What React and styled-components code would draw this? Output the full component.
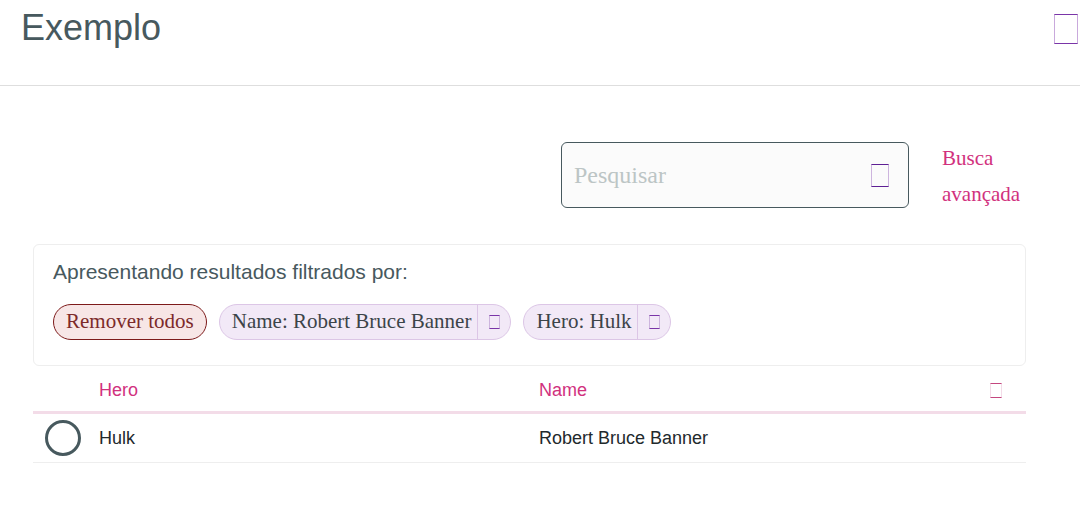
import React from 'react';
import styled, { createGlobalStyle } from 'styled-components';

const GlobalStyle = createGlobalStyle`
  * { box-sizing: border-box; }
  body {
    margin: 0;
    background: #fff;
    font-family: "Liberation Sans", Arial, sans-serif;
  }
`;

const Header = styled.header`
  display: flex;
  justify-content: space-between;
  height: 86px;
  padding: 14px 2px 0 21px;
  border-bottom: 1px solid #dedede;
`;

const Title = styled.h1`
  margin: -1px 0 0;
  font-size: 36px;
  line-height: 30px;
  font-weight: 400;
  color: #47595e;
`;

// icon font glyph that did not load: an empty box, heavy top and bottom
const Tofu = styled.span`
  display: block;
  flex: none;
  width: ${(p) => p.$w}px;
  height: ${(p) => p.$h}px;
  border-style: solid;
  border-width: 1px;
  border-color: ${(p) => p.$color} ${(p) => p.$side};
`;

const Main = styled.main`
  padding: 56px 54px 0 33px;
`;

const SearchRow = styled.div`
  display: flex;
  justify-content: flex-end;
  gap: 33px;
  font-family: "Liberation Serif", "Times New Roman", serif;
  margin-right: 5px;
`;

const SearchBox = styled.div`
  display: flex;
  align-items: center;
  width: 348px;
  height: 66px;
  padding: 0 19px 0 12px;
  border: 1px solid #47595e;
  border-radius: 6px;
  background: #fbfbfb;
`;

const SearchInput = styled.input`
  flex: 1;
  min-width: 0;
  border: 0;
  outline: 0;
  padding: 0;
  background: transparent;
  font: 24px "Liberation Serif", "Times New Roman", serif;
  color: #47595e;
  &::placeholder {
    color: #bcc5c5;
    opacity: 1;
  }
`;

const AdvancedLink = styled.a`
  width: 79px;
  font-size: 21px;
  line-height: 36px;
  color: #d1317e;
  margin-top: -2px;
`;

const FilterCard = styled.section`
  margin-top: 32px;
  height: 122px;
  padding: 15px 19px 0;
  border: 1px solid #eeeeee;
  border-radius: 6px;
`;

const FilterTitle = styled.p`
  margin: 0;
  font-size: 21px;
  line-height: 24px;
  color: #47595e;
`;

const ChipRow = styled.div`
  display: flex;
  gap: 12px;
  margin-top: 20px;
`;

const Chip = styled.div`
  display: flex;
  align-items: stretch;
  height: 36px;
  border: 1px solid ${(p) => (p.$danger ? '#7d1a1a' : '#dcc6e6')};
  border-radius: 18px;
  background: ${(p) => (p.$danger ? '#f7e6e6' : '#f2e9f7')};
  color: ${(p) => (p.$danger ? '#7d2a2a' : '#3c4449')};
  font: 21px/32px "Liberation Serif", "Times New Roman", serif;
`;

const ChipLabel = styled.span`
  padding: 0 ${(p) => (p.$danger ? 12 : 6)}px 0 12px;
  white-space: nowrap;
`;

const ChipClose = styled.span`
  display: flex;
  align-items: center;
  padding: 0 10px 0 11px;
  border-left: 1px solid #dcc6e6;
`;

const Table = styled.table`
  width: 100%;
  border-collapse: collapse;
  table-layout: fixed;
  font-size: 18px;
`;

const HeadCell = styled.th`
  height: 46px;
  padding: 4px 0 0;
  text-align: left;
  font-weight: 400;
  color: #d1317e;
  border-bottom: 3px solid #f3dce8;
`;

const Cell = styled.td`
  height: 50px;
  padding: 2px 0 0;
  color: #22292c;
  border-bottom: 1px solid #eeeeee;
`;

const RadioCell = styled(Cell)`
  padding: 0 0 0 12px;
`;

const Radio = styled.span`
  display: block;
  width: 36px;
  height: 36px;
  border: 3px solid #47595e;
  border-radius: 50%;
`;

const NameRow = styled.div`
  display: flex;
  align-items: center;
  justify-content: space-between;
  padding-right: 24px;
`;

export default function App() {
  return (
    <>
      <GlobalStyle />
      <Header>
        <Title>Exemplo</Title>
        <Tofu $w={24} $h={30} $color="#7a35a8" $side="#c9a9dc" />
      </Header>
      <Main>
        <SearchRow>
          <SearchBox>
            <SearchInput placeholder="Pesquisar" />
            <Tofu $w={18} $h={23} $color="#5e1f94" $side="#cdb5de" />
          </SearchBox>
          <AdvancedLink>Busca avançada</AdvancedLink>
        </SearchRow>
        <FilterCard>
          <FilterTitle>Apresentando resultados filtrados por:</FilterTitle>
          <ChipRow>
            <Chip $danger>
              <ChipLabel $danger>Remover todos</ChipLabel>
            </Chip>
            <Chip>
              <ChipLabel>Name: Robert Bruce Banner</ChipLabel>
              <ChipClose>
                <Tofu $w={11} $h={14} $color="#7a35a8" $side="#cdb5de" />
              </ChipClose>
            </Chip>
            <Chip>
              <ChipLabel>Hero: Hulk</ChipLabel>
              <ChipClose>
                <Tofu $w={11} $h={14} $color="#7a35a8" $side="#cdb5de" />
              </ChipClose>
            </Chip>
          </ChipRow>
        </FilterCard>
        <Table>
          <colgroup>
            <col width="66" />
            <col width="440" />
            <col />
          </colgroup>
          <thead>
            <tr>
              <HeadCell />
              <HeadCell>Hero</HeadCell>
              <HeadCell>
                <NameRow>
                  <span>Name</span>
                  <Tofu $w={12} $h={15} $color="#c4477f" $side="#f3dce8" />
                </NameRow>
              </HeadCell>
            </tr>
          </thead>
          <tbody>
            <tr>
              <RadioCell>
                <Radio />
              </RadioCell>
              <Cell>Hulk</Cell>
              <Cell>Robert Bruce Banner</Cell>
            </tr>
          </tbody>
        </Table>
      </Main>
    </>
  );
}
